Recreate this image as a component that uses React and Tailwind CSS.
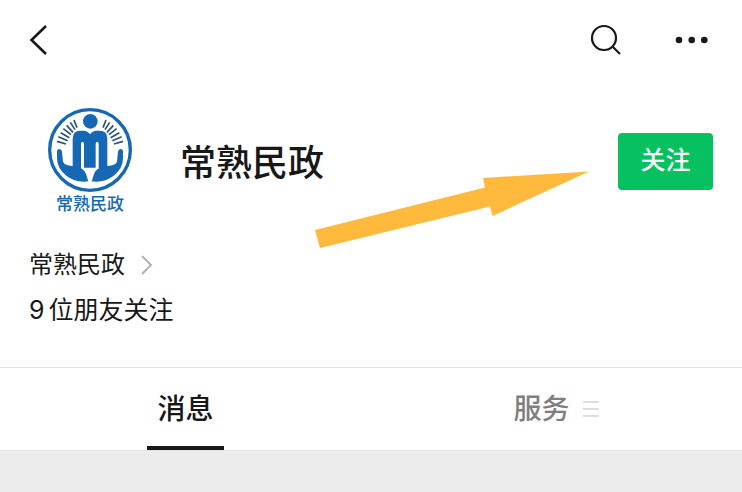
import React, { useState } from 'react';

function Logo() {
    return (
        <svg viewBox="36 36 258 258" className="h-[86px] w-[86px]" aria-hidden="true">
            <circle cx="165" cy="165" r="121" fill="none" stroke="#1668b4" strokeWidth="10" />
            <g fill="#1668b4">
                <circle cx="166" cy="79" r="22" />
                <path d="M113 217V132Q113 107 136 107H146Q157 107 165 118Q173 107 184 107H194Q217 107 217 132V217L191 220V148Q191 140 187 140Q182 140 182 148V218H147V148Q147 140 142 140Q138 140 138 148V220Z" />
                <path d="M66 170Q66 162 73 162Q80 162 81 170L84 200Q88 209 98 211L128 216Q148 220 154 240L160 259Q122 264 94 242Q66 220 66 190Z" />
                <path d="M264 170Q264 162 257 162Q250 162 249 170L246 200Q242 209 232 211L202 216Q182 220 176 240L170 259Q208 264 236 242Q264 220 264 190Z" />
            </g>
            <g stroke="#29547c" strokeWidth="5">
                <path d="M66 139L93 147M70 125L98 137M77 113L103 128M85 101L108 119M95 91L114 112M106 82L120 104M117 75L126 98" />
                <path d="M264 139L237 147M260 125L232 137M253 113L227 128M245 101L222 119M235 91L216 112M224 82L210 104M213 75L204 98" />
            </g>
        </svg>
    );
}

const tabs = [
    { id: 'messages', label: '消息' },
    { id: 'services', label: '服务', menu: true },
];

export default function App() {
    const [active, setActive] = useState('messages');

    return (
        <div className="min-h-screen bg-[#ececec] font-['Inter','Noto_Sans_CJK_SC',sans-serif] text-[#181818]">
            <div className="relative bg-white">
                {/* Top bar */}
                <header className="flex h-20 items-center justify-between pl-7 pr-8">
                    <button type="button" aria-label="返回">
                        <svg viewBox="0 0 20 32" className="h-8 w-5" fill="none" stroke="currentColor" strokeWidth="2.6">
                            <path d="M18 2L3.500 16L18 30" />
                        </svg>
                    </button>
                    <div className="flex items-center gap-[52px]">
                        <button type="button" aria-label="搜索">
                            <svg viewBox="0 0 32 32" className="h-8 w-8" fill="none" stroke="currentColor" strokeWidth="2.2">
                                <circle cx="14" cy="14" r="12" />
                                <path d="M22.500 22.500L30 30" />
                            </svg>
                        </button>
                        <button type="button" aria-label="更多">
                            <svg viewBox="0 0 36 8" className="h-2 w-9" fill="currentColor">
                                <circle cx="5" cy="4" r="3.300" />
                                <circle cx="17.700" cy="4" r="3.300" />
                                <circle cx="30.300" cy="4" r="3.300" />
                            </svg>
                        </button>
                    </div>
                </header>

                {/* Account */}
                <section className="flex items-center pl-[47px] pr-[29px] pt-[27px]">
                    <div className="flex flex-col items-center">
                        <Logo />
                        <span className="text-[17px] font-medium leading-[22px] text-[#1668b4]">常熟民政</span>
                    </div>
                    <h1 className="ml-[47px] flex-1 pt-1 text-[36px] font-medium leading-[50px]">常熟民政</h1>
                    <button type="button" className="h-[57px] w-[95px] rounded-[4px] bg-[#07c160] text-[25px] font-medium text-white">
                        关注
                    </button>
                </section>

                <section className="px-[29px] pb-8 pt-[30px]">
                    <a href="#account" className="flex items-center gap-4 text-[24px] leading-10">
                        常熟民政
                        <svg viewBox="0 0 12 20" className="h-5 w-3" fill="none" stroke="#b2b2b2" strokeWidth="2">
                            <path d="M1 1L10 10L1 19" />
                        </svg>
                    </a>
                    <p className="flex gap-1 text-[25px] leading-[50px]">
                        <span>9</span>
                        <span>位朋友关注</span>
                    </p>
                </section>

                {/* Tabs */}
                <nav role="tablist" className="grid h-[84px] grid-cols-2 border-y border-[#e5e5e5]">
                    {tabs.map((tab) => (
                        <button
                            key={tab.id}
                            type="button"
                            role="tab"
                            aria-selected={active === tab.id}
                            onClick={() => setActive(tab.id)}
                            className="flex justify-center text-[28px] font-medium"
                        >
                            <span
                                className={
                                    active === tab.id
                                        ? 'flex h-full items-center gap-3 border-b-4 border-[#181818] px-[10px] pt-1'
                                        : 'flex h-full items-center gap-3 border-b-4 border-transparent pt-1 text-[#7f7f7f]'
                                }
                            >
                                {tab.label}
                                {tab.menu && (
                                    <svg viewBox="0 0 18 18" className="h-[18px] w-[18px]" stroke="#dedede" strokeWidth="2">
                                        <path d="M1 2H17M1 9H17M1 16H17" />
                                    </svg>
                                )}
                            </span>
                        </button>
                    ))}
                </nav>

                {/* Pointer to the follow button */}
                <svg
                    viewBox="0 0 276 80"
                    className="pointer-events-none absolute right-[152px] top-[170px] h-20 w-[276px]"
                    fill="#ffba3d"
                    aria-hidden="true"
                >
                    <path d="M1 60L6 78L176 36.500L178.500 46L275 1.500L169 8L171 17.500Z" />
                </svg>
            </div>
        </div>
    );
}
